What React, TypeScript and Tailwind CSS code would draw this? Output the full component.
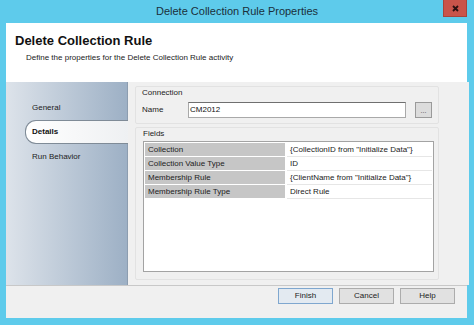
import React from "react";

const rows: [string, string][] = [
  ["Collection", '{CollectionID from "Initialize Data"}'],
  ["Collection Value Type", "ID"],
  ["Membership Rule", '{ClientName from "Initialize Data"}'],
  ["Membership Rule Type", "Direct Rule"],
];

export default function App() {
  return (
    <div
      className="w-[474px] h-[325px] bg-[#5ecbeb] flex flex-col overflow-hidden text-[#1e1e1e]"
      style={{ fontFamily: '"Liberation Sans", Arial, sans-serif' }}
    >
      {/* Title bar */}
      <div className="h-[23px] flex items-start relative shrink-0">
        <div className="flex-1 text-center text-[11px] leading-[23px] text-[#1b2f3a]">
          Delete Collection Rule Properties
        </div>
        <div className="absolute right-[7px] top-0 w-[24px] h-[17px] bg-[#c9544a] border border-[#a8443b] border-t-0 flex items-center justify-center">
          <svg width="7" height="7" viewBox="0 0 7 7">
            <path d="M1 1 L6 6 M6 1 L1 6" stroke="#2a1111" strokeWidth="1.8" />
          </svg>
        </div>
      </div>

      {/* Window body */}
      <div className="ml-[6px] mr-[7px] flex flex-col h-[295px] shrink-0">
        {/* Header */}
        <div className="h-[59px] bg-white shrink-0 pl-[9px] pt-[10px]">
          <div className="text-[13px] font-bold leading-[16px] text-[#111]">Delete Collection Rule</div>
          <div className="text-[8px] leading-[12px] pl-[11px] pt-[3px] text-[#222]">
            Define the properties for the Delete Collection Rule activity
          </div>
        </div>

        {/* Middle */}
        <div className="h-[203px] flex shrink-0">
          {/* Nav */}
          <div className="w-[122px] shrink-0 bg-gradient-to-r from-[#dde3ea] to-[#9db0c5] border-r border-[#8c9db0] pt-[20px] flex flex-col">
            <div className="pl-[26px] text-[8px] leading-[12px] text-[#222]">General</div>
            <div className="mt-[6px] ml-[19px] mr-[-2px] h-[24px] rounded-l-[11px] bg-gradient-to-r from-white to-[#eef0f2] border border-r-0 border-[#7f8b97] flex items-center pl-[6px] text-[8px] font-bold text-[#111]">
              Details
            </div>
            <div className="pl-[26px] mt-[7px] text-[8px] leading-[12px] text-[#222]">Run Behavior</div>
          </div>

          {/* Content */}
          <div className="flex-1 bg-[#f0f0f0] pl-[7px] pt-[4px] pr-[30px] pb-[5px] flex flex-col">
            <div className="h-[38px] border border-[#e2e2e2] rounded-[2px] pl-[6px] pr-[6px] shrink-0">
              <div className="text-[8px] leading-[10px] pt-[1px] text-[#222]">Connection</div>
              <div className="flex items-center mt-[4px]">
                <div className="w-[46px] text-[8px] text-[#222]">Name</div>
                <div className="w-[218px] h-[16px] bg-white border border-[#a9a9a9] border-t-[#6f6f6f] flex items-center pl-[1px] text-[8px] text-[#111]">
                  CM2012
                </div>
                <div className="ml-[9px] w-[17px] h-[16px] bg-[#dcdcdc] border border-[#9a9a9a] flex items-end justify-center pb-[3px] text-[7px] leading-[7px] text-[#444]">
                  ...
                </div>
              </div>
            </div>

            <div className="mt-[3px] flex-1 border border-[#e2e2e2] rounded-[2px] pl-[7px] pr-[4px] pb-[7px] flex flex-col">
              <div className="text-[8px] leading-[10px] pt-[1px] text-[#222]">Fields</div>
              <div className="mt-[2px] flex-1 bg-white border border-[#a3a3a3] p-[1px] flex flex-col">
                {rows.map(([k, v]) => (
                  <div key={k} className="flex h-[14px] mb-[0px]">
                    <div className="w-[140px] bg-[#c6c6c6] border-b border-white flex items-center pl-[3px] text-[8px] text-[#222]">
                      {k}
                    </div>
                    <div className="flex-1 ml-[2px] border-b border-[#e6e6e6] flex items-center pl-[3px] text-[8px] text-[#222]">
                      {v}
                    </div>
                  </div>
                ))}
              </div>
            </div>
          </div>
        </div>

        {/* Footer */}
        <div className="h-[33px] bg-[#f0f0f0] border-t border-[#c8c8c8] flex justify-end items-start pt-[2px] pr-[12px] gap-[6px] shrink-0">
          <div className="w-[55px] h-[16px] bg-[#e3eaf1] border border-[#7fa7cf] flex items-center justify-center text-[8px] text-[#222]">
            Finish
          </div>
          <div className="w-[55px] h-[16px] bg-[#e1e1e1] border border-[#acacac] flex items-center justify-center text-[8px] text-[#222]">
            Cancel
          </div>
          <div className="w-[55px] h-[16px] bg-[#e1e1e1] border border-[#acacac] flex items-center justify-center text-[8px] text-[#222]">
            Help
          </div>
        </div>
      </div>
    </div>
  );
}
